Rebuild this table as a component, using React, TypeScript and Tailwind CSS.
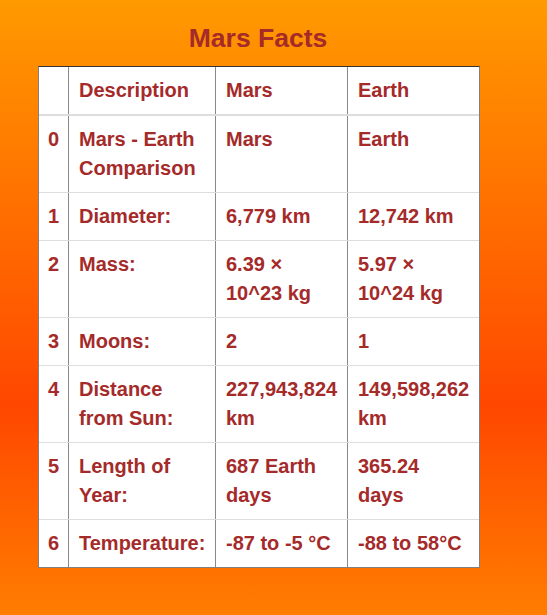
import React from "react";

const rows: [string, string, string, string][] = [
  ["0", "Mars - Earth Comparison", "Mars", "Earth"],
  ["1", "Diameter:", "6,779 km", "12,742 km"],
  ["2", "Mass:", "6.39 × 10^23 kg", "5.97 × 10^24 kg"],
  ["3", "Moons:", "2", "1"],
  ["4", "Distance from Sun:", "227,943,824 km", "149,598,262 km"],
  ["5", "Length of Year:", "687 Earth days", "365.24 days"],
  ["6", "Temperature:", "-87 to -5 °C", "-88 to 58°C"],
];

function Row({ cells, header }: { cells: string[]; header?: boolean }) {
  return (
    <div className={`grid grid-cols-[29px_147px_132px_132px] ${header ? "border-b-2 border-b-[#dddddd]" : ""}`}>
      {cells.map((c, i) => (
        <div
          key={i}
          className={`py-[9px] leading-[29px] ${i > 0 ? "border-l border-l-[#888888] pl-[10px] pr-[10px]" : "px-[9px]"}`}
        >
          {c}
        </div>
      ))}
    </div>
  );
}

export default function App() {
  return (
    <div
      className="min-h-[615px] w-full bg-[linear-gradient(to_bottom,#ff9a00_0%,#ff4700_66%,#ff7d00_100%)] pl-[38px] pt-[21px]"
      style={{ fontFamily: '"Liberation Sans", Arial, sans-serif' }}
    >
      <div className="w-[442px] text-[#a52a2a] font-bold">
        <h1 className="text-center text-[26.5px] leading-[34px] mb-[11px] pr-[2px]">Mars Facts</h1>
        <div className="bg-white border border-[#808080] border-t-[#333333] text-[20px]">
          <Row header cells={["", "Description", "Mars", "Earth"]} />
          {rows.map((r, idx) => (
            <div key={idx} className={idx > 0 ? "border-t border-t-[#dddddd]" : ""}>
              <Row cells={r} />
            </div>
          ))}
        </div>
      </div>
    </div>
  );
}
